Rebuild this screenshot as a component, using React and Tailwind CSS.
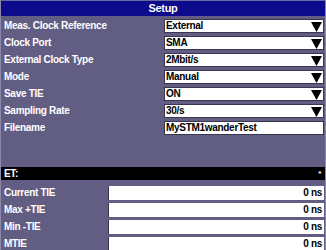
import { useState } from 'react'

const SETTINGS = [
  { label: 'Meas. Clock Reference', value: 'External', select: true },
  { label: 'Clock Port', value: 'SMA', select: true },
  { label: 'External Clock Type', value: '2Mbit/s', select: true },
  { label: 'Mode', value: 'Manual', select: true },
  { label: 'Save TIE', value: 'ON', select: true },
  { label: 'Sampling Rate', value: '30/s', select: true },
  { label: 'Filename', value: 'MySTM1wanderTest', select: false },
]

const RESULTS = [
  { label: 'Current TIE', value: '0 ns' },
  { label: 'Max +TIE', value: '0 ns' },
  { label: 'Min -TIE', value: '0 ns' },
  { label: 'MTIE', value: '0 ns' },
]

function Triangle() {
  return (
    <svg width="11" height="11" viewBox="0 0 11 11" className="shrink-0">
      <polygon points="0,1 11,1 5.5,11" fill="#000" />
    </svg>
  )
}

export default function App() {
  const [settings] = useState(SETTINGS)

  return (
    <div
      className="w-[326px] h-[250px] overflow-hidden bg-[#625d83] border-l border-r border-[#8c88a8] flex flex-col text-[10px] tracking-[-0.3px] font-bold leading-none"
      style={{ fontFamily: '"Liberation Sans", Arial, sans-serif' }}
    >
      {/* Header */}
      <div className="h-[16px] shrink-0 bg-[#0b0b8c] border-t border-[#6a6a9a] text-white flex items-center justify-center text-[11px]">
        Setup
      </div>

      {/* Setting rows */}
      <div className="flex flex-col gap-[3px] pt-[3px]">
        {settings.map(s => (
          <div key={s.label} className="flex items-center h-[14px]">
            <div className="w-[163px] pl-[3px] text-white">{s.label}</div>
            <div className="w-[160px] h-[14px] bg-white border border-[#3a3650] flex items-center justify-between pl-[1px] pr-[1px] text-black">
              <span>{s.value}</span>
              {s.select && <Triangle />}
            </div>
          </div>
        ))}
      </div>

      <div className="flex-1" />

      {/* ET bar */}
      <div className="h-[13px] shrink-0 bg-black text-white flex items-center justify-between pl-[3px] pr-[4px] mb-[6px]">
        <span>ET:</span>
        <span className="text-[8px]">*</span>
      </div>

      {/* Result rows */}
      <div className="flex flex-col gap-[3px] h-[64px]">
        {RESULTS.map(r => (
          <div key={r.label} className="flex items-center h-[14px]">
            <div className="w-[108px] pl-[3px] text-white border-r border-[#3a3650] h-full flex items-center">{r.label}</div>
            <div className="w-[215px] h-[14px] bg-white flex items-center justify-end pr-[2px] text-black">
              {r.value}
            </div>
          </div>
        ))}
      </div>
    </div>
  )
}
